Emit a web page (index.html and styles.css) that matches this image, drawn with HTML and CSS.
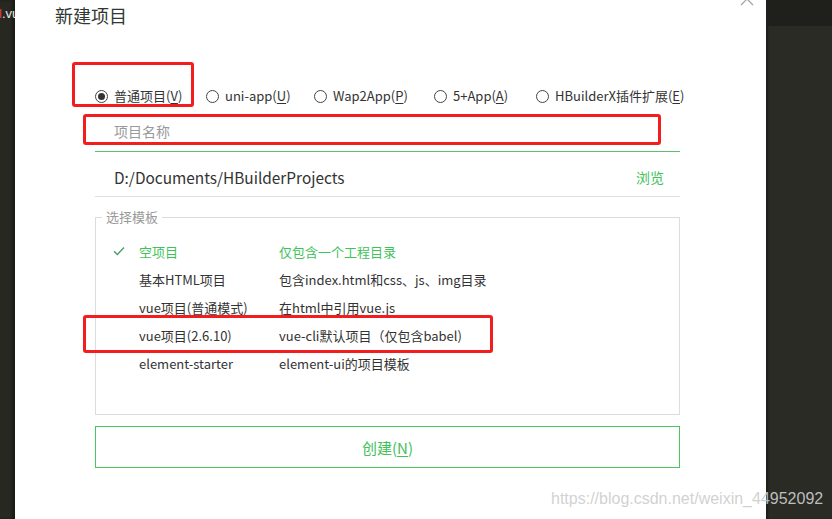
FILE: index.html
```html
<!DOCTYPE html>
<html lang="zh">
<head>
<meta charset="utf-8">
<link rel="stylesheet" href="styles.css">
</head>
<body>
<div class="app">
  <div class="editor-left"><span class="tab-text"><span class="red">l</span>.vue</span></div>
  <div class="dialog">
    <div class="close"><svg width="14" height="14" viewBox="0 0 14 14"><path d="M1 1L13 13M13 1L1 13" stroke="#a0a0a0" stroke-width="1.2" fill="none"/></svg></div>
    <div class="title">新建项目</div>
    <div class="content">
      <div class="radios">
        <label class="radio checked"><span class="circle"></span>普通项目(<u>V</u>)</label>
        <label class="radio"><span class="circle"></span>uni-app(<u>U</u>)</label>
        <label class="radio"><span class="circle"></span>Wap2App(<u>P</u>)</label>
        <label class="radio"><span class="circle"></span>5+App(<u>A</u>)</label>
        <label class="radio"><span class="circle"></span>HBuilderX插件扩展(<u>E</u>)</label>
      </div>
      <div class="name-input">项目名称</div>
      <div class="path-row"><span class="path">D:/Documents/HBuilderProjects</span><span class="browse">浏览</span></div>
      <fieldset class="templates">
        <legend>选择模板</legend>
        <div class="tpl active"><span class="check"><svg width="12" height="10" viewBox="0 0 12 10"><path d="M1 5.2L4.3 8.4L11 1.5" stroke="#4a9e6a" stroke-width="1.4" fill="none"/></svg></span><span class="c1">空项目</span><span class="c2">仅包含一个工程目录</span></div>
        <div class="tpl"><span class="check"></span><span class="c1">基本HTML项目</span><span class="c2">包含index.html和css、js、img目录</span></div>
        <div class="tpl"><span class="check"></span><span class="c1">vue项目(普通模式)</span><span class="c2">在html中引用vue.js</span></div>
        <div class="tpl"><span class="check"></span><span class="c1">vue项目(2.6.10)</span><span class="c2">vue-cli默认项目（仅包含babel)</span></div>
        <div class="tpl"><span class="check"></span><span class="c1">element-starter</span><span class="c2">element-ui的项目模板</span></div>
      </fieldset>
      <div class="create">创建(<u>N</u>)</div>
    </div>
  </div>
  <div class="editor-right"><div class="right-top"></div></div>
  <div class="mark mark1"></div>
  <div class="mark mark2"></div>
  <div class="mark mark3"></div>
  <div class="watermark">https://blog.csdn.net/weixin_44952092</div>
</div>
</body>
</html>
```

FILE: styles.css
```css
* { box-sizing: border-box; }
html, body { margin: 0; padding: 0; }
body {
  width: 832px;
  height: 519px;
  overflow: hidden;
  font-family: "Noto Sans CJK SC", "Noto Sans", sans-serif;
  color: #333;
}
.app {
  position: relative;
  display: flex;
  width: 832px;
  height: 519px;
}
.editor-left {
  width: 15px;
  background: #272822;
  box-shadow: inset -3px 0 3px rgba(0,0,0,0.35);
  overflow: hidden;
  white-space: nowrap;
}
.tab-text {
  display: block;
  margin-left: -1px;
  margin-top: 6px;
  font-size: 13px;
  line-height: 16px;
  color: #e8e8e8;
  font-family: "Liberation Sans", sans-serif;
}
.red { color: #e0403a; }
.dialog {
  position: relative;
  width: 751px;
  background: #fff;
  display: flex;
  flex-direction: column;
}
.close {
  position: absolute;
  left: 725px;
  top: -13px;
}
.title {
  margin: 3px 0 0 40px;
  font-size: 18px;
  line-height: 24px;
  color: #2e3833;
}
.content {
  margin: 0 0 0 80px;
  width: 585px;
  display: flex;
  flex-direction: column;
}
.radios {
  margin-top: 59px;
  height: 20px;
  display: flex;
  align-items: center;
}
.radio {
  flex: none;
  display: flex;
  align-items: center;
  font-size: 13px;
  line-height: 20px;
  color: #333;
  white-space: nowrap;
}
.radio:nth-child(1) { width: 111px; }
.radio:nth-child(2) { width: 108px; }
.radio:nth-child(3) { width: 120px; }
.radio:nth-child(4) { width: 102px; }
.radio u { text-underline-offset: 2px; }
.circle {
  width: 13px;
  height: 13px;
  border: 1px solid #444;
  border-radius: 50%;
  margin-right: 6px;
  display: flex;
  align-items: center;
  justify-content: center;
  flex: none;
}
.radio.checked .circle::after {
  content: "";
  width: 7px;
  height: 7px;
  border-radius: 50%;
  background: #333;
}
.name-input {
  margin-top: 7px;
  height: 39px;
  padding: 8px 0 0 19px;
  font-size: 14px;
  line-height: 20px;
  color: #9a9a9a;
  border-bottom: 1px solid #5bbf6e;
}
.path-row {
  display: flex;
  justify-content: space-between;
  padding: 15px 16px 0 19px;
  height: 45px;
  border-bottom: 1px solid #e0e0e0;
  font-size: 15.4px;
  line-height: 20px;
}
.path { color: #333; }
.browse { color: #3fc25a; font-size: 14px; }
.templates {
  margin: 12px 0 0 0;
  padding: 0 0 37px 0;
  border: 1px solid #dcdcdc;
  min-width: 0;
}
.templates legend {
  margin-left: 6px;
  padding: 0 4px;
  font-size: 13px;
  line-height: 16px;
  color: #999;
}
.templates legend + .tpl { margin-top: 12px; }
.tpl {
  display: flex;
  align-items: center;
  height: 28px;
  padding-left: 17px;
  font-size: 13px;
  color: #333;
  white-space: nowrap;
}
.check {
  width: 26px;
  display: flex;
  align-items: center;
}
.c1 { width: 140px; }
.tpl.active { color: #3fc25a; }
.create {
  margin-top: 11px;
  height: 42px;
  border: 1px solid #4ac65e;
  display: flex;
  align-items: center;
  justify-content: center;
  font-size: 15px;
  color: #3fc25a;
}
.create u { text-underline-offset: 2px; }
.editor-right {
  flex: 1;
  background: #2a2b25;
  box-shadow: inset 2px 0 2px rgba(0,0,0,0.3);
}
.right-top {
  height: 26px;
  background: #1f201c;
}
.mark {
  position: absolute;
  border: 3px solid #f31d1d;
  border-radius: 3px;
}
.mark1 { left: 72px; top: 62px; width: 122px; height: 45px; }
.mark2 { left: 83px; top: 114px; width: 578px; height: 31px; }
.mark3 { left: 83px; top: 315px; width: 410px; height: 38px; }
.watermark {
  position: absolute;
  left: 551px;
  top: 488px;
  font-family: "Liberation Sans", sans-serif;
  font-size: 16px;
  line-height: 22px;
  color: rgba(205,205,205,0.92);
  white-space: nowrap;
}
```
